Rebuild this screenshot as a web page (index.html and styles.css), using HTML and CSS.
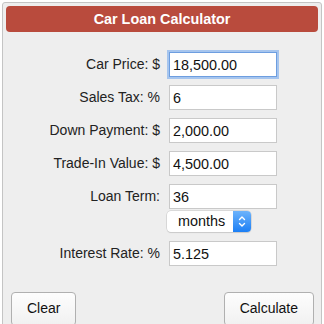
FILE: index.html
```html
<!DOCTYPE html>
<html>
<head>
<meta charset="utf-8">
<link rel="stylesheet" href="styles.css">
</head>
<body>
<div class="panel">
  <div class="header">Car Loan Calculator</div>
  <div class="form">
    <label class="lbl">Car Price: $</label>
    <input class="field focus" value="18,500.00">
    <label class="lbl">Sales Tax: %</label>
    <input class="field" value="6">
    <label class="lbl">Down Payment: $</label>
    <input class="field" value="2,000.00">
    <label class="lbl">Trade-In Value: $</label>
    <input class="field" value="4,500.00">
    <label class="lbl">Loan Term:</label>
    <div class="stack">
      <input class="field" value="36">
      <div class="select">
        <span class="select-text">months</span>
        <span class="stepper">
          <svg width="18" height="21" viewBox="0 0 18 21"><path d="M6.5 8.5 L9 6 L11.5 8.5" fill="none" stroke="#fff" stroke-width="1.4" stroke-linecap="round" stroke-linejoin="round"/><path d="M6.5 12.5 L9 15 L11.5 12.5" fill="none" stroke="#fff" stroke-width="1.4" stroke-linecap="round" stroke-linejoin="round"/></svg>
        </span>
      </div>
    </div>
    <label class="lbl">Interest Rate: %</label>
    <input class="field" value="5.125">
  </div>
  <div class="buttons">
    <button class="btn">Clear</button>
    <button class="btn">Calculate</button>
  </div>
</div>
</body>
</html>
```
FILE: styles.css
```css
html, body {
  margin: 0;
  padding: 0;
  background: #ffffff;
  font-family: "Liberation Sans", Arial, sans-serif;
  font-size: 14px;
  color: #222222;
}
.panel {
  margin: 2px 2px 0 2px;
  width: 320px;
  box-sizing: border-box;
  border: 1px solid #c4c4c4;
  border-radius: 3px;
  background: #eeeeee;
  padding-bottom: 20px;
}
.header {
  margin: 3px 3px 0 3px;
  height: 26px;
  line-height: 26px;
  border-radius: 4px;
  background: #b94b3d;
  color: #ffffff;
  font-weight: bold;
  font-size: 14.4px;
  text-align: center;
}
.form {
  display: grid;
  grid-template-columns: 157px 108px;
  column-gap: 9px;
  row-gap: 8px;
  padding-top: 20px;
}
.lbl {
  text-align: right;
  height: 25px;
  line-height: 25px;
  align-self: start;
  white-space: nowrap;
}
.field {
  box-sizing: border-box;
  width: 108px;
  height: 25px;
  margin: 0;
  padding: 0 3px;
  border: 1px solid #c9c9c9;
  background: #ffffff;
  font-family: inherit;
  font-size: 14.4px;
  color: #111111;
  outline: none;
}
.field.focus {
  border-color: #6d9ee0;
  box-shadow: 0 0 0 2px #a6c5ee;
}
.stack {
  display: flex;
  flex-direction: column;
  gap: 2px;
}
.select {
  margin-left: -2px;
  margin-bottom: 1px;
  width: 84px;
  height: 21px;
  box-sizing: border-box;
  display: flex;
  align-items: center;
  background: #ffffff;
  border-radius: 4px;
  box-shadow: 0 0 0 0.5px #c4c4c4, 0 1px 1px rgba(0,0,0,0.12);
}
.select-text {
  flex: 1;
  padding-left: 11px;
  font-size: 14.4px;
  color: #111111;
  line-height: 21px;
}
.stepper {
  width: 18px;
  height: 21px;
  border-radius: 0 4px 4px 0;
  background: linear-gradient(#6db3fb, #1b7ff5);
  display: flex;
}
.buttons {
  display: flex;
  justify-content: space-between;
  padding: 0 7px 0 8px;
  margin-top: 26px;
}
.btn {
  height: 34px;
  box-sizing: border-box;
  padding: 0 15px;
  border: 1px solid #b0b0b0;
  border-radius: 4px;
  background: linear-gradient(#fdfdfd, #f1f1f1);
  font-family: inherit;
  font-size: 14px;
  color: #111111;
  line-height: 28px;
  padding-bottom: 2px;
}
```
